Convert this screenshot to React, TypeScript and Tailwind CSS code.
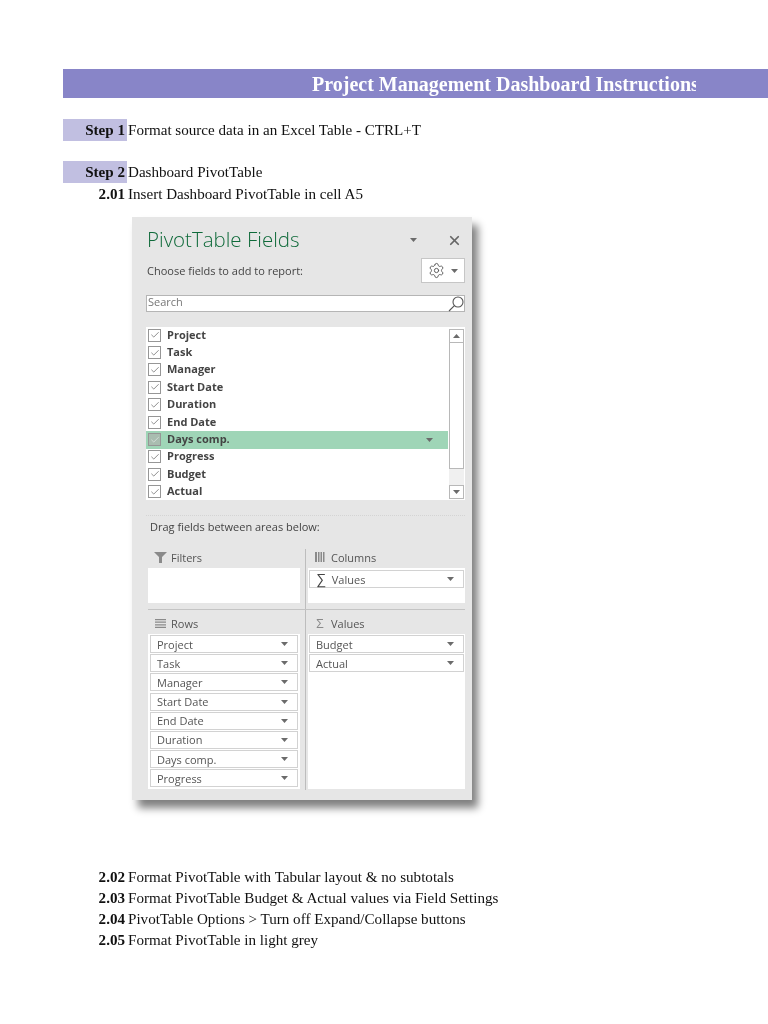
import { Check, Settings, X } from "lucide-react";

const serif = "font-['Liberation_Serif',serif]";
const ui = "font-['Open_Sans',sans-serif]";

const listFields = ["Project", "Task", "Manager", "Start Date", "Duration", "End Date", "Days comp.", "Progress", "Budget", "Actual"];
const rowFields = ["Project", "Task", "Manager", "Start Date", "End Date", "Duration", "Days comp.", "Progress"];
const valueFields = ["Budget", "Actual"];

function Caret({ className = "" }: { className?: string }) {
  return (
    <svg width="7" height="4" viewBox="0 0 7 4" className={className}>
      <path d="M0 0h7L3.5 4z" fill="#6b6b6b" />
    </svg>
  );
}

function Step({ label, children }: { label: string; children: string }) {
  return (
    <div className="ml-[63px] flex h-[22px] items-center">
      <div className="flex h-full w-[64px] items-center justify-end bg-[#c1bfe1] pr-[2px] pt-[2px] font-bold">{label}</div>
      <div className="pl-px pt-[2px]">{children}</div>
    </div>
  );
}

function SubStep({ label, children }: { label: string; children: string }) {
  return (
    <div className="ml-[63px] flex h-[21px] items-center pt-[2px]">
      <div className="w-[64px] pr-[2px] text-right font-bold">{label}</div>
      <div className="pl-px">{children}</div>
    </div>
  );
}

function FieldPill({ name, sigma }: { name: string; sigma?: boolean }) {
  return (
    <div className="flex h-[18px] items-center justify-between border border-[#d2d2d2] bg-white pl-[6px] pr-[9px] text-[11px] text-[#555]">
      <span className="flex items-center">
        {sigma && <span className="ml-[1px] mr-[6px] text-[14px] leading-none text-[#444]">∑</span>}
        {name}
      </span>
      <Caret />
    </div>
  );
}

function AreaHeader({ icon, label }: { icon: React.ReactNode; label: string }) {
  return (
    <div className="flex h-[19px] items-center pb-[3px] text-[11px] text-[#555]">
      <span className="flex w-[23px] justify-center pl-[1px]">{icon}</span>
      <span>{label}</span>
    </div>
  );
}

function PivotPanel() {
  return (
    <div className={`ml-[132px] mt-[13px] h-[583px] w-[340px] bg-[#e6e6e6] pl-[14px] pr-[7px] pt-[9px] shadow-[6px_8px_8px_#808080] ${ui}`}>
      <div className="flex h-[28px] items-center justify-between">
        <span className="mb-[2px] ml-px text-[20.5px] font-light leading-none text-[#0f6a3a]">PivotTable Fields</span>
        <div className="flex items-center">
          <Caret className="mr-[30px]" />
          <X size={15} strokeWidth={2.8} className="mr-[3px] text-[#666]" />
        </div>
      </div>

      <div className="mt-[4px] flex h-[25px] items-center justify-between">
        <span className="ml-px text-[11px] text-[#444]">Choose fields to add to report:</span>
        <div className="flex h-[25px] w-[44px] items-center justify-center gap-[6px] border border-[#c6c6c6] bg-white">
          <Settings size={17} strokeWidth={1.3} className="text-[#555]" />
          <Caret />
        </div>
      </div>

      <div className="mt-[12px] flex h-[17px] items-center justify-between border border-[#b5b5b5] bg-white pl-px text-[11px] text-[#777]">
        <span className="mb-[4px]">Search</span>
        <svg width="16" height="16" viewBox="0 0 16 16" fill="none" stroke="#555" strokeWidth="1.1">
          <circle cx="10" cy="6" r="5" />
          <path d="M6.4 9.6 1 15" />
        </svg>
      </div>

      <div className="mt-[15px] flex h-[173px] overflow-hidden bg-white">
        <div className="flex-1">
          {listFields.map((name) => {
            const active = name === "Days comp.";
            return (
              <div key={name} className={`flex h-[17.4px] items-center pl-[2px] text-[11px] font-bold text-[#444] ${active ? "bg-[#9fd5b7]" : ""}`}>
                <span className={`mb-px flex size-[13px] items-center justify-center border border-[#969696] ${active ? "bg-[#a9bdb0]" : "bg-white"}`}>
                  <Check size={10} strokeWidth={1.8} className={active ? "text-[#dfe5e1]" : "text-[#666]"} />
                </span>
                <span className="mb-[3px] ml-[6px] flex-1">{name}</span>
                {active && <Caret className="mr-[15px]" />}
              </div>
            );
          })}
        </div>
        <div className="ml-px mr-px mt-[2px] flex h-[170px] w-[15px] flex-col bg-[#f0f0f0]">
          <div className="flex h-[14px] items-center justify-center border border-[#b8b8b8] bg-white">
            <Caret className="rotate-180" />
          </div>
          <div className="h-[126px] border border-t-0 border-[#b8b8b8] bg-white" />
          <div className="mt-auto flex h-[14px] items-center justify-center border border-[#b8b8b8] bg-white">
            <Caret />
          </div>
        </div>
      </div>

      <div className="mt-[15px] border-t border-dotted border-[#d4d4d4]" />
      <div className="flex h-[21px] items-center pl-[4px] text-[11px] text-[#444]">Drag fields between areas below:</div>

      <div className="ml-[2px] mt-[12px] w-[317px]">
        <div className="grid h-[60px] grid-cols-[152px_8px_157px]">
          <div>
            <AreaHeader
              label="Filters"
              icon={
                <svg width="13" height="11" viewBox="0 0 13 11">
                  <path d="M0 0h13L8 5v6H5V5z" fill="#8a8a8a" />
                </svg>
              }
            />
            <div className="h-[35px] bg-white" />
          </div>
          <div className="ml-[5px] w-px bg-[#bdbdbd]" />
          <div>
            <AreaHeader
              label="Columns"
              icon={
                <svg width="11" height="10" viewBox="0 0 11 10" fill="#8a8a8a">
                  <path d="M0 0h2v10H0zM3 0h1.5v10H3zM5.5 0H7v10H5.5zM8 0h1.5v10H8z" />
                </svg>
              }
            />
            <div className="h-[35px] bg-white px-px pt-[2px]">
              <FieldPill name="Values" sigma />
            </div>
          </div>
        </div>
        <div className="h-px bg-[#c4c4c4]" />
        <div className="grid h-[180px] grid-cols-[152px_8px_157px]">
          <div>
            <div className="h-[5px]" />
            <AreaHeader
              label="Rows"
              icon={
                <svg width="11" height="9" viewBox="0 0 11 9" fill="#8a8a8a">
                  <path d="M0 0h11v1.2H0zM0 2.6h11v1.2H0zM0 5.2h11v1.2H0zM0 7.8h11V9H0z" />
                </svg>
              }
            />
            <div className="flex h-[155px] flex-col gap-[1.2px] bg-white px-[2px] pt-px">
              {rowFields.map((name) => (
                <FieldPill key={name} name={name} />
              ))}
            </div>
          </div>
          <div className="ml-[5px] w-px bg-[#bdbdbd]" />
          <div>
            <div className="h-[5px]" />
            <AreaHeader label="Values" icon={<span className="text-[13px] leading-none text-[#8a8a8a]">Σ</span>} />
            <div className="flex h-[155px] flex-col gap-[1.2px] bg-white px-px pt-px">
              {valueFields.map((name) => (
                <FieldPill key={name} name={name} />
              ))}
            </div>
          </div>
        </div>
      </div>
    </div>
  );
}

export default function App() {
  return (
    <div className={`h-[1024px] w-[768px] overflow-hidden bg-white pt-[69px] text-[15.1px] leading-none text-[#111] blur-[0.3px] ${serif}`}>
      <div className="ml-[63px] flex h-[29px] items-center bg-[#8885c8] pl-[249px] text-[20px] font-bold text-white">
        <span className="w-[384px] overflow-hidden whitespace-nowrap pt-px leading-[27px]">Project Management Dashboard Instructions</span>
      </div>

      <div className="mt-[21px]">
        <Step label="Step 1">Format source data in an Excel Table - CTRL+T</Step>
      </div>
      <div className="mt-[20px]">
        <Step label="Step 2">Dashboard PivotTable</Step>
        <SubStep label="2.01">Insert Dashboard PivotTable in cell A5</SubStep>
      </div>

      <PivotPanel />

      <div className="mt-[66px]">
        <SubStep label="2.02">Format PivotTable with Tabular layout &amp; no subtotals</SubStep>
        <SubStep label="2.03">Format PivotTable Budget &amp; Actual values via Field Settings</SubStep>
        <SubStep label="2.04">PivotTable Options &gt; Turn off Expand/Collapse buttons</SubStep>
        <SubStep label="2.05">Format PivotTable in light grey</SubStep>
      </div>
    </div>
  );
}
